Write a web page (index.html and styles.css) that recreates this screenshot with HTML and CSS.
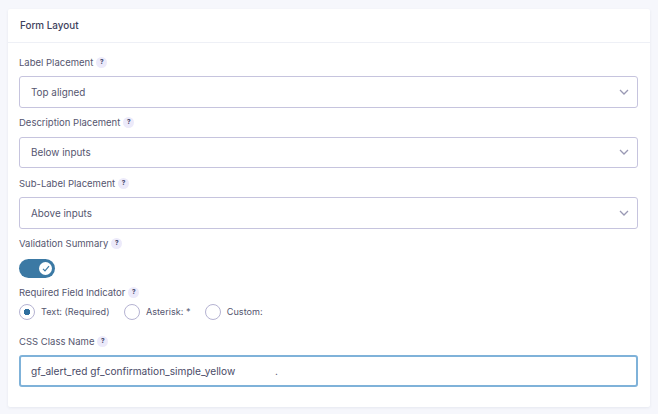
FILE: index.html

```html
<!DOCTYPE html>
<html lang="en">
<head>
    <meta charset="UTF-8">
    <title>Form Layout</title>
    <link rel="stylesheet" href="styles.css">
</head>
<body>

<div class="card">
    <div class="card-head">Form Layout</div>
    <div class="card-body">

        <div class="label">Label Placement <span class="help">?</span></div>
        <div class="select">
            <span>Top aligned</span>
            <svg class="chevron" width="10" height="6" viewBox="0 0 10 6"><path d="M1 1l4 4 4-4"/></svg>
        </div>

        <div class="label">Description Placement <span class="help">?</span></div>
        <div class="select">
            <span>Below inputs</span>
            <svg class="chevron" width="10" height="6" viewBox="0 0 10 6"><path d="M1 1l4 4 4-4"/></svg>
        </div>

        <div class="label">Sub-Label Placement <span class="help">?</span></div>
        <div class="select">
            <span>Above inputs</span>
            <svg class="chevron" width="10" height="6" viewBox="0 0 10 6"><path d="M1 1l4 4 4-4"/></svg>
        </div>

        <div class="label">Validation Summary <span class="help">?</span></div>
        <div class="toggle">
            <div class="knob">
                <svg width="8" height="7" viewBox="0 0 8 7"><path d="M1 3.8l2 2 4-4.6"/></svg>
            </div>
        </div>

        <div class="label label-required">Required Field Indicator <span class="help">?</span></div>
        <div class="radios">
            <div class="radio-item"><span class="radio checked"></span>Text: (Required)</div>
            <div class="radio-item"><span class="radio"></span>Asterisk: *</div>
            <div class="radio-item"><span class="radio"></span>Custom:</div>
        </div>

        <div class="label label-css">CSS Class Name <span class="help">?</span></div>
        <input class="text-input" type="text" value="gf_alert_red gf_confirmation_simple_yellow              .">
    </div>
</div>

</body>
</html>
```

FILE: styles.css

```css
body {
    margin: 0;
    padding: 9px 8px 7px;
    background-color: #f6f7fc;
    font-family: Inter, "Liberation Sans", sans-serif;
    color: #55566f;
    font-size: 9.5px;
}
.card {
    background-color: #fff;
    border-radius: 2px;
    box-shadow: 0 1px 3px rgba(40, 45, 90, 0.08);
    height: 398px;
}
.card-head {
    height: 33px;
    line-height: 33px;
    padding-left: 12px;
    border-bottom: 1px solid #eef0f6;
    font-size: 9.9px;
    font-weight: 500;
    color: #3e3f5c;
}
.card-body {
    padding: 11px 12px 0 11px;
}
.label {
    display: flex;
    align-items: center;
    gap: 3px;
    box-sizing: border-box;
    height: 15.5px;
    padding-top: 1px;
}
.help {
    width: 11px;
    height: 11px;
    border-radius: 50%;
    background-color: #eceafa;
    color: #45466a;
    font-size: 6.5px;
    font-weight: 700;
    text-align: center;
    line-height: 11px;
}
.select {
    display: flex;
    align-items: center;
    justify-content: space-between;
    box-sizing: border-box;
    height: 31.5px;
    margin: 6.5px 0 7px;
    padding: 0 8px 0 11px;
    border: 1px solid #c6c4de;
    border-radius: 3px;
    font-size: 9.9px;
}
.chevron path {
    fill: none;
    stroke: #9a99b4;
    stroke-width: 1.3;
}
.toggle {
    display: flex;
    align-items: center;
    justify-content: flex-end;
    box-sizing: border-box;
    width: 36px;
    height: 19px;
    margin-top: 7.5px;
    padding-right: 3px;
    border-radius: 10px;
    background-color: #3b79a4;
}
.knob {
    display: flex;
    align-items: center;
    justify-content: center;
    width: 13px;
    height: 13px;
    border-radius: 50%;
    background-color: #fff;
}
.knob path {
    fill: none;
    stroke: #3b79a4;
    stroke-width: 1.2;
}
.label-required {
    margin-top: 6.5px;
}
.radios {
    display: flex;
    gap: 14.4px;
    margin-top: 4px;
    height: 16px;
}
.radio-item {
    display: flex;
    align-items: center;
    gap: 6px;
    font-size: 9.1px;
}
.radio {
    box-sizing: border-box;
    width: 16px;
    height: 16px;
    border: 1px solid #b5b3d2;
    border-radius: 50%;
    background-color: #fff;
}
.radio.checked {
    background: radial-gradient(circle, #2f6f9e 0 3px, #fff 3.5px);
}
.label-css {
    margin-top: 13.5px;
}
.text-input {
    display: block;
    box-sizing: border-box;
    width: 100%;
    height: 32px;
    margin-top: 6px;
    padding: 0 10px;
    border: 2px solid #7fb2d9;
    border-radius: 3px;
    outline: none;
    font-family: Inter, "Liberation Sans", sans-serif;
    font-size: 10.15px;
    color: #4a4b68;
}
```
